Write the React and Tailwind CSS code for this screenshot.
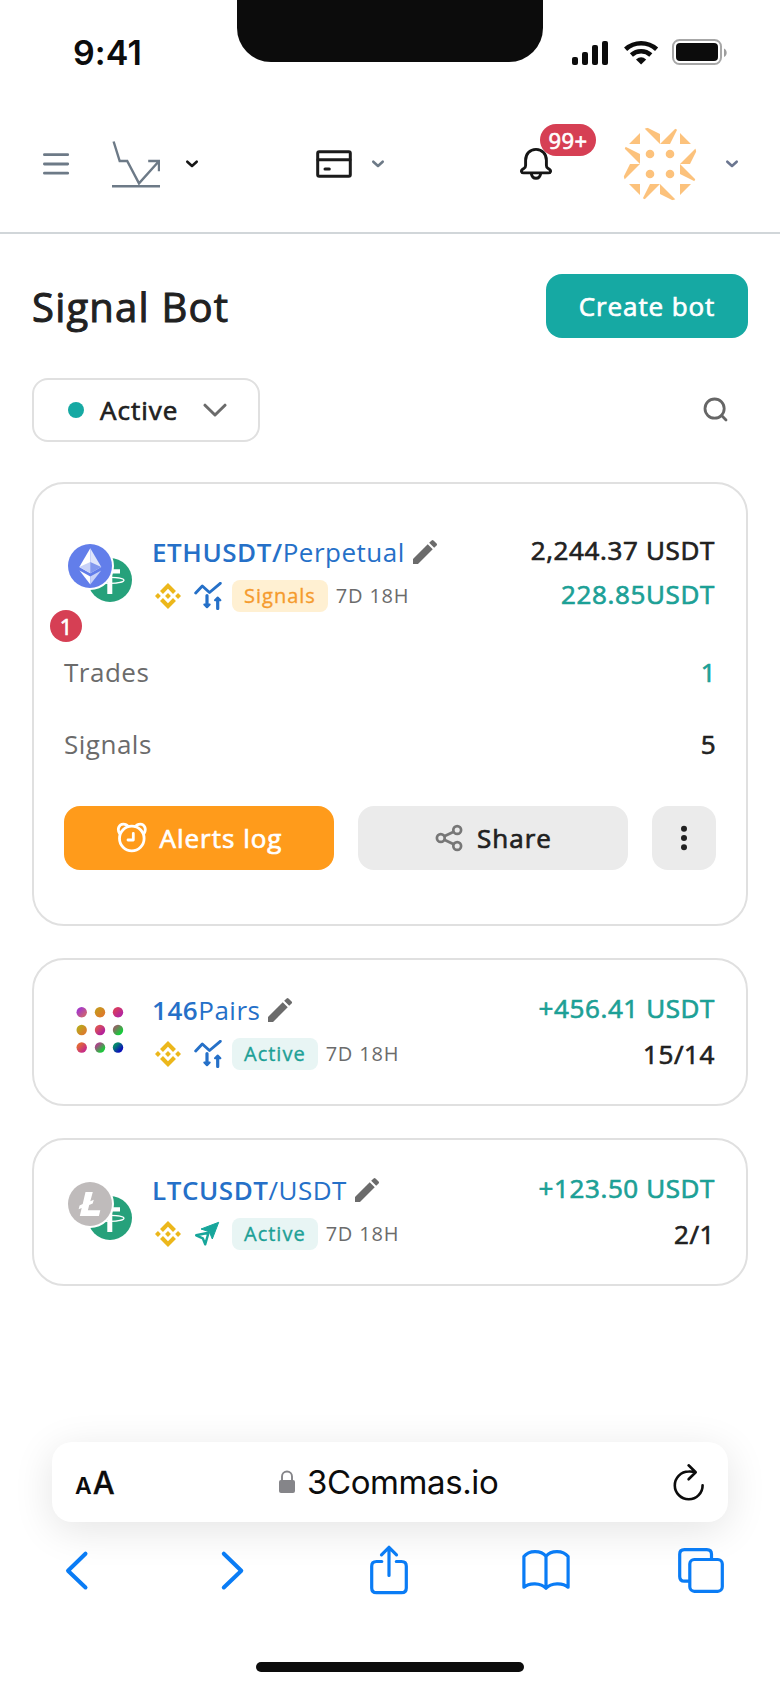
import React from "react";
import { MdEdit } from "react-icons/md";
import { SiBinance } from "react-icons/si";

const OPEN = "font-['Open_Sans',sans-serif]";
const INTER = "font-['Inter',sans-serif]";
// Open Sans Medium is approximated by thickening the regular weight
const MEDIUM = "font-normal [-webkit-text-stroke:0.7px_currentColor]";

function StatusBar() {
  return (
    <div className={`flex h-[92px] items-start justify-between ${INTER}`}>
      <div className="flex h-[105px] w-[237px] items-center pl-[73px]">
        <span className="text-[34px] font-semibold tracking-[0.1px] text-[#0c0c0c]">9:41</span>
      </div>
      <div className="h-[62px] w-[306px] rounded-b-[34px] bg-[#0c0c0c]" />
      <div className="flex h-[104px] w-[237px] items-center pl-[29px]">
        <svg width="156" height="26" viewBox="572 38 156 26" fill="#0c0c0c">
          <rect x="572" y="56" width="6" height="8" rx="2" />
          <rect x="582" y="51" width="6" height="13" rx="2" />
          <rect x="592" y="44" width="6" height="20" rx="2" />
          <rect x="602" y="40" width="6" height="24" rx="2" />
          <path d="M625.6 48.2a23 23 0 0 1 31 0" fill="none" stroke="#0c0c0c" strokeWidth="4.6" />
          <path d="M631.4 54a14.5 14.5 0 0 1 19.4 0" fill="none" stroke="#0c0c0c" strokeWidth="4.6" />
          <path d="M636 58.4a8.2 8.2 0 0 1 10.200 0L641.100 63.400Z" />
          <rect x="673" y="39" width="48" height="24" rx="6.500" fill="none" stroke="#0c0c0c" strokeOpacity=".36" strokeWidth="2" />
          <rect x="676" y="42" width="42" height="18" rx="4" />
          <path d="M724 47.500c3.600 1.500 3.600 7 0 8.500Z" fillOpacity=".4" />
        </svg>
      </div>
    </div>
  );
}

function SmallChevron({ color }) {
  return (
    <svg width="14" height="10" viewBox="0 0 14 10" fill="none" stroke={color} strokeWidth="2.6" strokeLinecap="round" strokeLinejoin="round">
      <path d="M2.300 2.700 7 7l4.700-4.300" />
    </svg>
  );
}

function Avatar() {
  return (
    <svg width="80" height="80" viewBox="0 0 80 80" fill="#fcc27c">
      <clipPath id="avatar-clip">
        <circle cx="40" cy="40" r="38.500" />
      </clipPath>
      <g clipPath="url(#avatar-clip)">
        <path d="M20 0 40 10V20ZM60 0 50 20H40ZM0 20 20 30V40ZM20 40H10L0 60ZM80 20 70 40H60ZM60 40V50L80 60ZM40 60H30L20 80ZM40 60V70L60 80Z" />
        <path d="M20 9V20H9ZM60 9V20H71ZM20 71V60H9ZM60 71V60H71Z" />
        <g stroke="#fcc27c" strokeWidth="1.500" fill="none" strokeDasharray="4 2">
          <path d="M5.500 18.500 18.500 5.500M61.500 5.500 74.500 18.500M5.500 61.500 18.500 74.500M61.500 74.500 74.500 61.500" />
        </g>
        <circle cx="30" cy="30" r="4.300" />
        <circle cx="50" cy="30" r="4.300" />
        <circle cx="30" cy="50" r="4.300" />
        <circle cx="50" cy="50" r="4.300" />
      </g>
    </svg>
  );
}

function Header() {
  return (
    <header className="flex h-[142px] items-center border-b-2 border-[#d1d6d9] pt-1">
      <svg className="ml-[42px]" width="28" height="24" viewBox="42 152 28 24" fill="none" stroke="#6d7a87" strokeWidth="2.8" strokeLinecap="round">
        <path d="M44.400 154.700H67.700M44.400 164H67.700M44.400 173.200H67.700" />
      </svg>
      <svg className="ml-[42px]" width="48" height="48" viewBox="112 140 48 48" fill="none" stroke="#6d7a87" strokeWidth="2.400">
        <path d="M113.600 141.500 119.700 161H127.200L139 183.300 158.600 161.500M148.200 161H159V171.200M112 186.300H160" />
      </svg>
      <div className="ml-[25px] flex">
        <SmallChevron color="#161616" />
      </div>
      <svg className="ml-[117px]" width="36" height="28" viewBox="316 150 36 28" fill="none" stroke="#1b1b1b" strokeWidth="3" strokeLinecap="round">
        <rect x="317.700" y="151.700" width="32.600" height="24.600" rx="1.500" />
        <path d="M318 159.800H350M325 168.900H329.300" />
      </svg>
      <div className="ml-[19px] flex">
        <SmallChevron color="#6d7a87" />
      </div>
      <div className="relative ml-[135px] flex">
        <svg width="32" height="34" viewBox="520 148 32 34" fill="none" stroke="#151515" strokeWidth="2.900" strokeLinejoin="round">
          <path d="M536 150.400c-6.300 0-10.400 4.700-10.400 10.800v5.300c0 1.200-.6 2.200-1.600 2.900l-1.300.9c-2.200 1.500-1.200 3.600 1 3.600h24.600c2.200 0 3.200-2.100 1-3.600l-1.300-.9c-1-.7-1.600-1.700-1.600-2.900v-5.300c0-6.100-4.100-10.800-10.400-10.800Z" />
          <path d="M531.300 174.500c.5 3.200 2.300 4.800 4.700 4.800s4.200-1.600 4.700-4.800" />
        </svg>
        <div className={`absolute left-[20px] top-[-23px] flex h-8 w-14 items-center justify-center rounded-full bg-[#d63f54] text-[22px] leading-8 tracking-[0.5px] text-white ${MEDIUM}`}>
          99+
        </div>
      </div>
      <div className="ml-[68px] flex">
        <Avatar />
      </div>
      <div className="ml-[25px] flex">
        <SmallChevron color="#6b7690" />
      </div>
    </header>
  );
}

function Tether() {
  return (
    <g>
      <circle cx="42" cy="36" r="22" fill="#26a17b" />
      <path d="M31 25.300H52V29.600H44.300V50H39.300V29.600H31Z" fill="#fff" />
      <ellipse cx="42" cy="36.300" rx="14" ry="3" fill="none" stroke="#fff" strokeWidth="1.200" />
    </g>
  );
}

function EthTether() {
  return (
    <svg width="64" height="60" viewBox="0 0 64 60">
      <Tether />
      <circle cx="22" cy="22" r="24" fill="#fff" />
      <circle cx="22" cy="22" r="22" fill="#627eea" />
      <path d="M22.300 4.300 11.300 23 22.300 29.300Z" fill="#fff" />
      <path d="M22.300 4.300 33.300 23 22.300 29.300Z" fill="#dfe5fb" />
      <path d="M22.300 18 11.300 23 22.300 29.300Z" fill="#c8d2f8" />
      <path d="M22.300 18 33.300 23 22.300 29.300Z" fill="#8197ee" />
      <path d="M11.500 26.500 22.300 32.500V40.500Z" fill="#fff" />
      <path d="M33.200 26.500 22.300 32.500V40.500Z" fill="#c8d2f8" />
    </svg>
  );
}

function LtcTether() {
  return (
    <svg width="64" height="60" viewBox="0 0 64 60">
      <Tether />
      <circle cx="22" cy="22" r="24" fill="#fff" />
      <circle cx="22" cy="22" r="22" fill="#bfbbbb" />
      <path d="M17.500 10H24.800L22.300 19.200 25.800 17.800 24.700 21.600 21.200 23 19.900 28.300H32.300L30.900 34H11.800L13.700 26 10.600 27.200 11.600 23.400 14.700 22.100Z" fill="#fff" />
    </svg>
  );
}

const DOTS = [
  [13.7, 10.3, "#a63bc4", "#c9607a"],
  [32, 10.3, "#c8951f", "#dc7c2a"],
  [50, 10.3, "#d63a62", "#b5279c"],
  [13.7, 28, "#bca41e", "#d97f2c"],
  [32, 28, "#d8505a", "#b52398"],
  [50, 28, "#8a6a62", "#18c93c"],
  [13.7, 45.5, "#e0653a", "#c82f84"],
  [32, 45.5, "#a54a86", "#1fc43c"],
  [50, 45.5, "#078a6c", "#0a12b8"],
];

function PairsGrid() {
  return (
    <svg width="64" height="60" viewBox="0 0 64 60">
      {DOTS.map(([x, y, from, to], i) => (
        <g key={i}>
          <linearGradient id={`dot-${i}`} x1="0.1" y1="0.1" x2="0.9" y2="0.9">
            <stop offset="0.2" stopColor={from} />
            <stop offset="0.8" stopColor={to} />
          </linearGradient>
          <circle cx={x} cy={y} r="5.200" fill={`url(#dot-${i})`} />
        </g>
      ))}
    </svg>
  );
}

function FuturesIcon() {
  return (
    <svg width="28" height="28" viewBox="194 583 28 28" fill="none" stroke="#2570c8" strokeWidth="2.900" strokeLinecap="round" strokeLinejoin="round">
      <path d="M195.700 594 202.300 587 209.500 593.500 220.300 584.300" />
      <path d="M207 596.500V607M217.700 609.500V600" strokeWidth="3.200" />
      <path d="M204.300 605.500 207 608.200 209.700 605.500ZM215 601.200 217.700 598.500 220.400 601.200Z" strokeWidth="2" fill="#2570c8" />
    </svg>
  );
}

function SpotIcon() {
  return (
    <svg width="28" height="28" viewBox="194 1221 28 28" fill="#17a69b" stroke="#17a69b" strokeLinejoin="round">
      <path d="M218.700 1223.300 201 1230 209.300 1232.800 212.300 1240Z" strokeWidth="1" />
      <path d="M196.200 1236.300 208.500 1233.800 205.200 1245.300 202.800 1239.300Z" fill="none" strokeWidth="2.400" />
    </svg>
  );
}

function BotSummary({ icon, strong, rest, kind, badge, badgeClass }) {
  return (
    <div className="flex">
      <div className="flex w-[88px] pt-3 pl-1">{icon}</div>
      <div>
        <div className="flex h-10 items-center text-[26px] leading-10 tracking-[0.5px] text-[#2570c8]">
          <span className="font-semibold tracking-[0.55px]">{strong}</span>
          <span>{rest}</span>
          <MdEdit className="ml-[4px]" size={32} color="#6b6b6b" />
        </div>
        <div className="mt-2 flex h-8 items-center text-[20px] leading-8">
          <SiBinance className="ml-[3px]" size={26} color="#ecb71b" />
          <div className="ml-[13px] flex">{kind}</div>
          <div className={`ml-[10px] flex h-8 items-center rounded-lg px-3 tracking-[1px] [-webkit-text-stroke:0.35px_currentColor] ${badgeClass}`}>{badge}</div>
          <span className="ml-2 tracking-[0.8px] text-[#6b6b6b]">7D 18H</span>
        </div>
      </div>
    </div>
  );
}

function SmallCard({ bot, profit, ratio }) {
  return (
    <section className="mt-8 flex h-[148px] justify-between rounded-[32px] border-2 border-[#e0e0e0] pt-[30px] pr-[31px] pl-[30px]">
      {bot}
      <div className={`-mt-[5px] text-right text-[26px] leading-[46px] tracking-[0.6px] text-[#212121] ${MEDIUM}`}>
        <div className="text-[#1ca096]">{profit}</div>
        <div>{ratio}</div>
      </div>
    </section>
  );
}

function MainCard() {
  return (
    <section className="relative mt-10 h-[444px] rounded-[32px] border-2 border-[#e0e0e0] px-[30px] pt-12">
      <div className="flex h-[104px] justify-between">
        <BotSummary
          icon={<EthTether />}
          strong="ETHUSDT/"
          rest="Perpetual"
          kind={<FuturesIcon />}
          badge="Signals"
          badgeClass="bg-[#fff0d2] text-[#f59b2d]"
        />
        <div className={`-mt-1 pr-[1px] text-right text-[26px] leading-[44px] tracking-[0.65px] text-[#212121] ${MEDIUM}`}>
          <div>2,244.37 USDT</div>
          <div className="text-[#1ca096]">228.85USDT</div>
        </div>
      </div>
      <div className={`absolute top-[126px] left-[16px] flex size-8 items-center justify-center rounded-full bg-[#d63f54] text-[22px] leading-8 text-white ${MEDIUM}`}>1</div>
      <div className="flex h-[72px] items-center justify-between text-[26px] tracking-[0.5px] text-[#6b6b6b]">
        <span>Trades</span>
        <span className={`text-[#1ca096] ${MEDIUM}`}>1</span>
      </div>
      <div className="flex h-[72px] items-center justify-between text-[26px] tracking-[0.5px] text-[#6b6b6b]">
        <span>Signals</span>
        <span className={`text-[#212121] ${MEDIUM}`}>5</span>
      </div>
      <div className={`mt-[26px] flex gap-6 text-[26px] tracking-[1px] ${MEDIUM}`}>
        <button className="flex h-16 w-[270px] items-center justify-center gap-3 rounded-2xl bg-[#ff9b1b] text-white">
          <svg width="32" height="32" viewBox="115 822 32 32" fill="none" stroke="#fff" strokeWidth="2.800" strokeLinecap="round" strokeLinejoin="round">
            <circle cx="130.800" cy="838.500" r="12.300" />
            <path d="M132.300 833.400V840H127M118.600 833.500c-2.800-4.400-.5-9.400 3.700-9.400 2.200 0 3.800.8 4.800 2.400M143 833.500c2.800-4.400.5-9.400-3.700-9.400-2.200 0-3.800.8-4.800 2.400" />
          </svg>
          <span>Alerts log</span>
        </button>
        <button className="flex h-16 w-[270px] items-center justify-center gap-[13px] rounded-2xl bg-[#ebebeb] text-[#212121]">
          <svg width="30" height="32" viewBox="434 822 30 32" fill="none" stroke="#777" strokeWidth="2.700">
            <circle cx="440.800" cy="838" r="3.900" />
            <circle cx="457.200" cy="830" r="3.900" />
            <circle cx="457.200" cy="846" r="3.900" />
            <path d="M444.300 836.300 453.700 831.700M444.300 839.700 453.700 844.300" />
          </svg>
          <span>Share</span>
        </button>
        <button className="flex size-16 items-center justify-center rounded-2xl bg-[#ebebeb]">
          <svg width="8" height="26" viewBox="0 0 8 26" fill="#212121">
            <circle cx="4" cy="3.700" r="3" />
            <circle cx="4" cy="13" r="3" />
            <circle cx="4" cy="22.300" r="3" />
          </svg>
        </button>
      </div>
    </section>
  );
}

function BrowserBar() {
  return (
    <footer className="mt-[156px]">
      <div className={`mx-[52px] flex h-20 items-center rounded-[20px] bg-white shadow-[0_8px_40px_rgba(0,0,0,0.11)] ${INTER} text-[#0c0c0c]`}>
        <div className="flex w-[200px] items-baseline pt-[2px] pl-[23px] font-semibold">
          <span className="text-[23px]">A</span>
          <span className="ml-[1px] text-[31px] font-medium [-webkit-text-stroke:0.3px_currentColor]">A</span>
        </div>
        <div className="flex flex-1 items-center pl-[26px]">
          <svg width="18" height="24" viewBox="0 0 18 24">
            <rect x="1" y="10" width="16" height="13" rx="2" fill="#858589" />
            <path d="M4 11V6.500a5 5 0 0 1 10 0V11" fill="none" stroke="#858589" strokeWidth="1.900" />
          </svg>
          <span className="ml-[11px] pt-[1px] text-[33px] tracking-[-0.4px]">3Commas.io</span>
        </div>
        <svg className="mr-[22px]" width="34" height="38" viewBox="672 1463 34 38" fill="none" stroke="#0c0c0c" strokeWidth="2.600" strokeLinecap="round" strokeLinejoin="round">
          <path d="M702.600 1485.200A13.900 13.900 0 1 1 688.700 1471.500C691.500 1471.300 693.500 1471.700 695.500 1472.200M688.600 1465.300 695.700 1472.300 688.600 1479.300" />
        </svg>
      </div>
      <nav className="grid h-[98px] grid-cols-5 justify-items-center pt-[19px] text-[#0a7cf5]">
        <svg width="60" height="60" viewBox="48 1541 60 60" fill="none" stroke="currentColor" strokeWidth="4" strokeLinecap="round" strokeLinejoin="round">
          <path d="M85.500 1553.700 68 1570.700 85.500 1587.500" />
        </svg>
        <svg width="60" height="60" viewBox="204 1541 60 60" fill="none" stroke="currentColor" strokeWidth="4" strokeLinecap="round" strokeLinejoin="round">
          <path d="M223.800 1553.700 241.300 1570.700 223.800 1587.500" />
        </svg>
        <svg width="60" height="60" viewBox="360 1541 60 60" fill="none" stroke="currentColor" strokeWidth="3.200" strokeLinecap="round" strokeLinejoin="round">
          <path d="M381.800 1561.500H376.500Q371.700 1561.500 371.700 1566.300V1588Q371.700 1592.700 376.500 1592.700H401.500Q406.300 1592.700 406.300 1588V1566.300Q406.300 1561.500 401.500 1561.500H396.300M389 1575.500V1547.500M381.500 1554.800 389 1547.300 396.500 1554.800" />
        </svg>
        <svg width="60" height="60" viewBox="516 1541 60 60" fill="none" stroke="currentColor" strokeWidth="3.200" strokeLinecap="round" strokeLinejoin="round">
          <path d="M546 1556.200C541 1550 529 1550 523.900 1556.500V1587.200C529 1582.500 541 1582.500 546 1588.300ZM546 1556.200C551 1550 563 1550 568.100 1556.500V1587.200C563 1582.500 551 1582.500 546 1588.300" />
        </svg>
        <svg width="60" height="60" viewBox="672 1541 60 60" fill="none" stroke="currentColor" strokeWidth="3.200" strokeLinejoin="round">
          <rect x="689.800" y="1559.500" width="32.500" height="31.800" rx="4.500" />
          <path d="M711.500 1559V1554.200Q711.500 1549.600 706.800 1549.600H684.400Q679.700 1549.600 679.700 1554.200V1576.500Q679.700 1581.200 684.400 1581.200H689.500" />
        </svg>
      </nav>
      <div className="mx-auto mt-[42px] h-[10px] w-[268px] rounded-full bg-[#0c0c0c]" />
    </footer>
  );
}

export default function App() {
  return (
    <div className={`h-[1688px] w-[780px] overflow-hidden bg-white ${OPEN}`}>
      <StatusBar />
      <Header />
      <main className="px-8 pt-10">
        <div className="flex h-16 items-center justify-between">
          <h1 className="pt-[2px] text-[40px] font-normal tracking-[1.2px] text-[#212121] [-webkit-text-stroke:1px_currentColor]">Signal Bot</h1>
          <button className={`flex h-16 w-[202px] items-center justify-center rounded-2xl bg-[#16a9a3] text-[26px] tracking-[0.9px] text-white ${MEDIUM}`}>
            Create bot
          </button>
        </div>
        <div className="mt-10 flex h-16 items-center justify-between">
          <button className={`flex h-16 w-[228px] items-center rounded-2xl border-2 border-[#e0e0e0] pl-[34px] text-[26px] tracking-[1px] text-[#212121] ${MEDIUM}`}>
            <span className="size-4 rounded-full bg-[#16a9a3]" />
            <span className="ml-4">Active</span>
            <svg className="ml-[25px]" width="24" height="16" viewBox="0 0 24 16" fill="none" stroke="#6b6b6b" strokeWidth="3" strokeLinecap="round" strokeLinejoin="round">
              <path d="M2 3.200 12 13 22 3.200" />
            </svg>
          </button>
          <svg className="mr-[18px]" width="28" height="28" viewBox="702 396 28 28" fill="none" stroke="#666" strokeWidth="2.800" strokeLinecap="round">
            <circle cx="714.600" cy="408.600" r="9.600" />
            <path d="M721.600 415.600 726 420" />
          </svg>
        </div>
        <MainCard />
        <SmallCard
          bot={<BotSummary icon={<PairsGrid />} strong="146" rest="Pairs" kind={<FuturesIcon />} badge="Active" badgeClass="bg-[#e8f5f4] text-[#1ca096]" />}
          profit="+456.41 USDT"
          ratio="15/14"
        />
        <SmallCard
          bot={<BotSummary icon={<LtcTether />} strong="LTCUSDT" rest="/USDT" kind={<SpotIcon />} badge="Active" badgeClass="bg-[#e8f5f4] text-[#1ca096]" />}
          profit="+123.50 USDT"
          ratio="2/1"
        />
      </main>
      <BrowserBar />
    </div>
  );
}
